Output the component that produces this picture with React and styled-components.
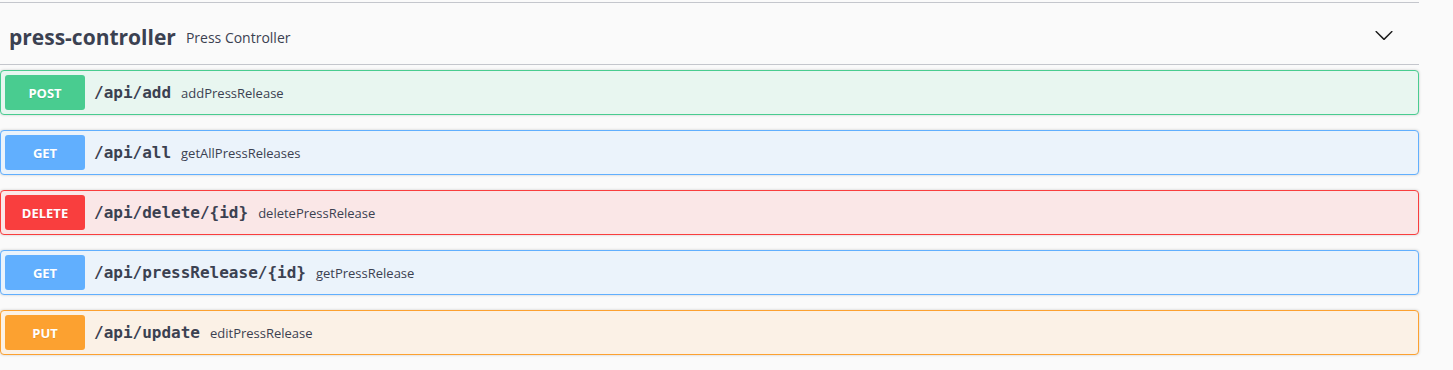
import React from 'react';
import styled, { createGlobalStyle } from 'styled-components';

const GlobalStyle = createGlobalStyle`
  html, body {
    margin: 0;
    padding: 0;
    background: #fafafa;
  }
  body {
    font-family: "Open Sans", "Noto Sans", sans-serif;
    color: #3b4151;
  }
`

const methodColors = {
  post: { main: '#49cc90', bg: '#e8f6f0' },
  get: { main: '#61affe', bg: '#ebf3fb' },
  delete: { main: '#f93e3e', bg: '#fae7e7' },
  put: { main: '#fca130', bg: '#fbf1e6' },
}

const Section = styled.div`
  width: 1419px;
  border-top: 1px solid #c4c6cc;
  margin-top: 2px;
`

const TagHeader = styled.h3`
  display: flex;
  align-items: center;
  box-sizing: border-box;
  height: 62px;
  margin: 0 0 5px;
  padding: 7px 25px 0 9px;
  border-bottom: 1px solid #c4c6cc;
  font-family: "Open Sans", "Noto Sans", sans-serif;
`

const TagName = styled.span`
  font-size: 21px;
  font-weight: 700;
  color: #3b4151;
`

const TagDescription = styled.small`
  flex: 1;
  padding: 0 10px;
  font-size: 14px;
  font-weight: 400;
  color: #3b4151;
`

const Arrow = styled.svg`
  width: 20px;
  height: 20px;
  fill: #1b1b1b;
  margin-top: -4px;
`

const OpBlock = styled.div`
  display: flex;
  align-items: center;
  padding: 4px;
  margin-bottom: 15px;
  border: 1px solid ${p => methodColors[p.$method].main};
  background: ${p => methodColors[p.$method].bg};
  border-radius: 4px;
  box-shadow: 0 0 3px rgba(0, 0, 0, 0.19);
`

const MethodBadge = styled.span`
  box-sizing: border-box;
  width: 80px;
  height: 35px;
  display: flex;
  align-items: center;
  justify-content: center;
  border-radius: 3px;
  background: ${p => methodColors[p.$method].main};
  color: #fff;
  font-size: 13px;
  font-weight: 700;
  text-shadow: 0 1px 0 rgba(0, 0, 0, 0.1);
`

const Path = styled.span`
  padding: 0 10px 0 9px;
  font-family: "DejaVu Sans Mono", "Liberation Mono", monospace;
  font-size: 16px;
  font-weight: 700;
  color: #3b4151;
`

const Summary = styled.span`
  font-size: 13px;
  color: #3b4151;
`

const operations = [
  { method: 'post', path: '/api/add', summary: 'addPressRelease' },
  { method: 'get', path: '/api/all', summary: 'getAllPressReleases' },
  { method: 'delete', path: '/api/delete/{id}', summary: 'deletePressRelease' },
  { method: 'get', path: '/api/pressRelease/{id}', summary: 'getPressRelease' },
  { method: 'put', path: '/api/update', summary: 'editPressRelease' },
]

const App = () => {
  return (
    <>
      <GlobalStyle />
      <Section>
        <TagHeader>
          <TagName>press-controller</TagName>
          <TagDescription>Press Controller</TagDescription>
          <Arrow viewBox="0 0 20 20">
            <path d="M17.418 6.109c.272-.268.709-.268.979 0s.271.701 0 .969l-7.908 7.83c-.27.268-.707.268-.979 0l-7.908-7.83c-.27-.268-.27-.701 0-.969.271-.268.709-.268.979 0L10 13.25l7.418-7.141z" />
          </Arrow>
        </TagHeader>
        {operations.map(op => (
          <OpBlock key={op.method + op.path} $method={op.method}>
            <MethodBadge $method={op.method}>{op.method.toUpperCase()}</MethodBadge>
            <Path>{op.path}</Path>
            <Summary>{op.summary}</Summary>
          </OpBlock>
        ))}
      </Section>
    </>
  );
}

export default App;
